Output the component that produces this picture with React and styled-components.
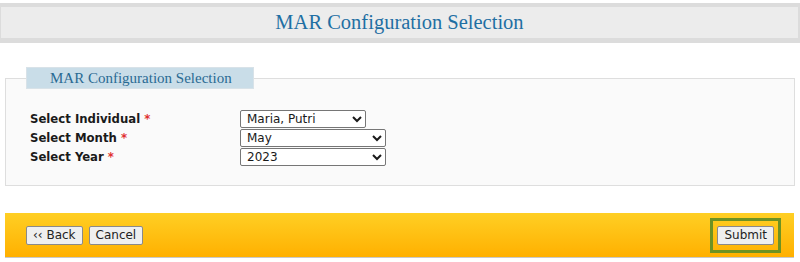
import React from 'react';
import styled, { createGlobalStyle } from 'styled-components';

const GlobalStyle = createGlobalStyle`
  body {
    margin: 0;
    background: #ffffff;
    font-family: "DejaVu Sans", Verdana, sans-serif;
  }
`;

const fields = [
  { label: 'Select Individual', value: 'Maria, Putri', width: 126 },
  { label: 'Select Month', value: 'May', width: 146 },
  { label: 'Select Year', value: '2023', width: 146 },
];

const App = () => {
  return (
    <Page>
      <GlobalStyle />
      <Header>
        <HeaderTitle>MAR Configuration Selection</HeaderTitle>
      </Header>
      <Fieldset>
        <Legend>MAR Configuration Selection</Legend>
        <FormGrid>
          {fields.map((f) => (
            <React.Fragment key={f.label}>
              <Label>
                {f.label} <Required>*</Required>
              </Label>
              <Select $width={f.width} defaultValue={f.value}>
                <option>{f.value}</option>
              </Select>
            </React.Fragment>
          ))}
        </FormGrid>
      </Fieldset>
      <Footer>
        <ButtonGroup>
          <Button>‹‹ Back</Button>
          <Button>Cancel</Button>
        </ButtonGroup>
        <Highlight>
          <Button>Submit</Button>
        </Highlight>
      </Footer>
    </Page>
  );
};

const Page = styled.div`
  padding-top: 3px;
  width: 800px;
`;

const Header = styled.div`
  height: 31px;
  border-style: solid;
  border-color: #dcdcdc;
  border-width: 4px 2px 5px 1px;
  background: #ececec;
  display: flex;
  align-items: center;
  justify-content: center;
`;

const HeaderTitle = styled.h1`
  margin: 0;
  font-family: "Liberation Serif", "Times New Roman", serif;
  font-weight: normal;
  font-size: 20.5px;
  color: #1f6fa3;
`;

const Fieldset = styled.fieldset`
  margin: 24px 5px 0 5px;
  padding: 0 20px 19px 20px;
  border: 1px solid #dedede;
  background: #fafafa;
`;

const Legend = styled.legend`
  box-sizing: border-box;
  padding: 0 21px 0 23px;
  height: 22px;
  white-space: nowrap;
  background: #c9dde8;
  border: 1px solid #d8e2e8;
  font-family: "Liberation Serif", "Times New Roman", serif;
  font-size: 15px;
  color: #2a6a93;
  line-height: 20px;
`;

const FormGrid = styled.div`
  display: grid;
  grid-template-columns: 210px auto;
  grid-auto-rows: 19px;
  align-items: center;
  margin: 20px 0 0 4px;
`;

const Label = styled.div`
  font-family: "DejaVu Sans Condensed", "DejaVu Sans", Verdana, sans-serif;
  font-weight: bold;
  font-size: 13px;
  color: #1a1a1a;
`;

const Required = styled.span`
  color: #e03030;
`;

const Select = styled.select`
  width: ${(p) => p.$width}px;
  height: 18px;
  padding: 0 0 0 2px;
  font-family: "DejaVu Sans", Verdana, sans-serif;
  font-size: 12px;
  color: #1a1a1a;
  border: 1px solid #767676;
  border-radius: 2px;
  background: #ffffff;
`;

const Footer = styled.div`
  margin: 27px 6px 0 5px;
  height: 44px;
  padding: 0 13px 0 21px;
  display: flex;
  align-items: center;
  justify-content: space-between;
  background: linear-gradient(#ffcf24, #ffb000);
  border-bottom: 1px solid #c9c9c9;
`;

const ButtonGroup = styled.div`
  display: flex;
  gap: 6px;
`;

const Button = styled.button`
  height: 19px;
  padding: 0 6px;
  font-family: "DejaVu Sans", Verdana, sans-serif;
  font-size: 12px;
  color: #222;
  background: #efefef;
  border: 1px solid #8a8a8a;
  border-radius: 2px;
`;

const Highlight = styled.div`
  border: 3px solid #6e9223;
  padding: 5px 4px;
  display: flex;
`;

export default App;
